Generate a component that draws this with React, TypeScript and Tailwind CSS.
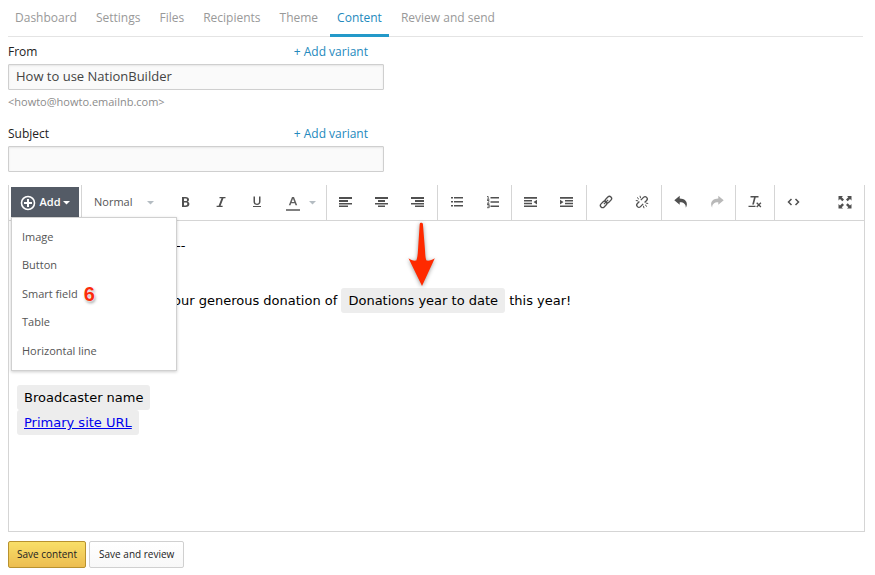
import type { ReactNode } from "react";

const tabs = ["Dashboard", "Settings", "Files", "Recipients", "Theme", "Content", "Review and send"];
const addItems = ["Image", "Button", "Smart field", "Table", "Horizontal line"];

function Caret({ className }: { className: string }) {
  return (
    <svg viewBox="0 0 7 4" className={`h-1 w-[7px] ${className}`} fill="currentColor" aria-hidden="true">
      <path d="M0 0h7L3.5 3.5z" />
    </svg>
  );
}

function Icon({ children }: { children: ReactNode }) {
  return (
    <svg viewBox="0 0 16 16" className="size-4" fill="currentColor" aria-hidden="true">
      {children}
    </svg>
  );
}

function Tool({ label, children, muted = false }: { label: string; children: ReactNode; muted?: boolean }) {
  return (
    <button
      type="button"
      aria-label={label}
      disabled={muted}
      className={`flex h-full w-9 shrink-0 items-center justify-center pb-0.5 ${muted ? "text-[#b9b9b9]" : "text-[#505050]"}`}
    >
      <Icon>{children}</Icon>
    </button>
  );
}

function Group({ children, tight = false }: { children: ReactNode; tight?: boolean }) {
  return (
    <div className={`flex h-full shrink-0 items-center border-r border-[#d5d5d5] ${tight ? "pl-px" : "px-px"}`}>
      {children}
    </div>
  );
}

function Field({ id, label, value, children }: { id: string; label: string; value: string; children?: ReactNode }) {
  return (
    <div className="w-[376px] max-w-full">
      <div className="flex items-center justify-between pr-4 leading-4">
        <label htmlFor={id}>{label}</label>
        <a href="#variant" className="text-[#2389bd]">
          + Add variant
        </a>
      </div>
      <input
        id={id}
        defaultValue={value}
        className="mt-1 block h-[26px] w-full rounded-[1px] border border-[#cfcfcf] bg-[#fafafa] px-[7px] pb-0.5 text-[13px] text-[#444] shadow-[inset_0_1px_2px_#e6e6e6] outline-none"
      />
      {children}
    </div>
  );
}

const link = (
  <g transform="rotate(-45 8 8)" fill="none" stroke="currentColor" strokeWidth="1.3">
    <rect x="1" y="5.8" width="7.4" height="4.4" rx="2.2" />
    <rect x="7.6" y="5.8" width="7.4" height="4.4" rx="2.2" />
    <path d="M5 8h6" strokeWidth="1.2" />
  </g>
);

const unlink = (
  <g fill="none" stroke="currentColor" strokeWidth="1.3">
    <g transform="rotate(-45 8 8)">
      <path d="M6.5 5.800H3.700a2.200 2.200 0 0 0 0 4.400h3.800M8.500 5.800h3.800a2.200 2.200 0 0 1 0 4.400H9.500" />
    </g>
    <path
      d="M6 1.800l.6 2.400M3 3.400l1.900 1.800M1.800 6.500l2.300.4M10 14.200l-.6-2.400M13 12.600l-1.900-1.800M14.200 9.500l-2.300-.4"
      strokeWidth="1"
    />
  </g>
);

const undo = <path d="M1.300 6.200L6.700 1.800v2.600c4.900.1 7.200 2.700 7.200 5.800 0 1.300-.4 2.500-1.100 3.500.1-3.400-1.900-5.400-6.100-5.400v2.500z" />;

export default function App() {
  return (
    <main className="pl-2 pr-3 font-['Open_Sans','Noto_Sans',sans-serif] text-xs text-[#222]">
      <nav className="flex h-[37px] gap-[5px] border-b border-[#e4e4e4]">
        {tabs.map((tab) => (
          <a
            key={tab}
            href="#tab"
            aria-current={tab === "Content" ? "page" : undefined}
            className={`-mb-px flex items-center px-[7px] ${
              tab === "Content" ? "border-b-3 border-[#2399c9] pt-[2px] text-[#2389bd]" : "pb-px text-[#999]"
            }`}
          >
            {tab}
          </a>
        ))}
      </nav>

      <form className="pt-[7px]">
        <Field id="from" label="From" value="How to use NationBuilder">
          <p className="mt-1 text-[11px] leading-4 text-[#8b8b8b]">&lt;howto@howto.emailnb.com&gt;</p>
        </Field>
        <div className="pt-4">
          <Field id="subject" label="Subject" value="" />
        </div>

        <section className="-mr-0.5 mt-[13px] border-x border-b border-[#d5d5d5]">
          <div className="flex h-9 border-b border-[#d5d5d5]">
            <div className="relative flex h-full shrink-0 items-end border-r border-[#d5d5d5] px-0.5 pb-0.5">
              <button
                type="button"
                aria-expanded="true"
                className="flex h-[31px] w-[68px] items-center justify-center gap-1 bg-[#545b66] font-semibold text-white"
              >
                <svg viewBox="0 0 16 16" className="size-4" fill="none" stroke="currentColor" strokeWidth="1.6" aria-hidden="true">
                  <circle cx="8" cy="8" r="6.5" />
                  <path d="M8 4v8M4 8h8" strokeWidth="2" />
                </svg>
                <span className="flex items-center gap-[3px] text-[11px]">
                  Add
                  <Caret className="text-white" />
                </span>
              </button>
              <ul className="absolute left-0.5 top-8 z-10 flex h-[154px] w-[166px] flex-col border border-[#d0d0d0] bg-white py-[5px] text-[11px] text-[#555] shadow-[0_1px_3px_#00000033]">
                {addItems.map((item) => (
                  <li key={item} className="flex flex-1 items-center px-2.5">
                    <button type="button">{item}</button>
                    {item === "Smart field" && (
                      <span className="pl-1.5 font-['Liberation_Sans',sans-serif] text-xl leading-5 font-bold text-[#fb2b0b] [text-shadow:0_0_2px_#fff,0_0_2px_#fff,1px_2px_3px_#999]">
                        6
                      </span>
                    )}
                  </li>
                ))}
              </ul>
            </div>

            <Group>
              <div className="relative flex h-full w-[84px] items-center">
                <select
                  aria-label="Paragraph style"
                  className="h-full w-full appearance-none bg-transparent pl-[11px] text-[11px] text-[#555] outline-none"
                >
                  <option>Normal</option>
                </select>
                <Caret className="pointer-events-none absolute right-[13px] text-[#b4bcc2]" />
              </div>
              <Tool label="Bold">
                <path d="M5 3h3.6c2.2 0 3.4.9 3.4 2.5 0 1.1-.6 1.9-1.6 2.2 1.3.3 2 1.1 2 2.3 0 1.9-1.4 3-3.7 3H5zm2 1.6v2.5h1.5c1 0 1.5-.4 1.5-1.2 0-.9-.5-1.3-1.5-1.3zm0 4v2.8h1.7c1.1 0 1.6-.5 1.6-1.4s-.6-1.4-1.7-1.4z" />
              </Tool>
              <Tool label="Italic">
                <path d="M6.500 3h6v1.200h-2L7.600 11.800h2V13h-6v-1.200h2L8.500 4.200h-2z" />
              </Tool>
              <Tool label="Underline">
                <path d="M4.500 2.500H6v5c0 1.500.7 2.200 2 2.200s2-.7 2-2.200v-5h1.500v5.100c0 2.100-1.300 3.400-3.500 3.400s-3.500-1.300-3.500-3.400zM4 12h8v1H4z" />
              </Tool>
              <button
                type="button"
                aria-label="Text color"
                className="flex h-full w-[50px] items-center gap-[9px] pl-[11px] text-[#606060]"
              >
                <svg viewBox="0 0 14 16" className="h-4 w-3.5" fill="currentColor" aria-hidden="true">
                  <path d="M6 2h2l3.200 8.200H9.500L8.800 8.300H5.200l-.7 1.900H2.800zm1 1.700L5.700 7h2.600z" />
                  <path d="M0 14h14v2H0z" opacity=".8" />
                </svg>
                <Caret className="text-[#b4bcc2]" />
              </button>
            </Group>

            <Group>
              <Tool label="Align left">
                <path d="M1 3h13v2H1zM1 6h9v2H1zM1 9h13v1.5H1zM1 11.5h9V13H1z" />
              </Tool>
              <Tool label="Align center">
                <path d="M1 3h13v2H1zM4 6h7v2H4zM1 9h13v1.5H1zM4 11.5h7V13H4z" />
              </Tool>
              <Tool label="Align right">
                <path d="M1 3h13v2H1zM5 6h9v2H5zM1 9h13v1.5H1zM5 11.5h9V13H5z" />
              </Tool>
            </Group>

            <Group tight>
              <Tool label="Bulleted list">
                <path d="M2 3h2v1.6H2zM5 3h9v1.6H5zM2 7h2v1.6H2zM5 7h9v1.6H5zM2 11h2v1.6H2zM5 11h9v1.6H5z" />
              </Tool>
              <Tool label="Numbered list">
                <path d="M5.5 3H14v1.6H5.5zM5.5 7.2H14v1.6H5.5zM5.5 11.4H14V13H5.5z" />
                <path
                  d="M2 2.5h1.2V5M2 5.3h2.4M2 6.5h2v1.2L2.3 9.3H4.4M2 10.5h2.2v3.2H2M2.5 12h1.7"
                  fill="none"
                  stroke="currentColor"
                  strokeWidth=".9"
                />
              </Tool>
            </Group>

            <Group>
              <Tool label="Outdent">
                <path d="M1 3h13v1.7H1zM1 6h8v1.5H1zM1 8.7h8v1.5H1zM1 11.5h13V13H1zM14 5.8v4.6L10.5 8.1z" />
              </Tool>
              <Tool label="Indent">
                <path d="M1 3h13v1.7H1zM6 6h8v1.5H6zM6 8.7h8v1.5H6zM1 11.5h13V13H1zM1 5.8v4.6l3.5-2.3z" />
              </Tool>
            </Group>

            <Group>
              <Tool label="Insert link">{link}</Tool>
              <Tool label="Remove link">{unlink}</Tool>
            </Group>

            <Group tight>
              <Tool label="Undo">{undo}</Tool>
              <Tool label="Redo" muted>
                <g transform="matrix(-1 0 0 1 16 0)">{undo}</g>
              </Tool>
            </Group>

            <Group>
              <Tool label="Clear formatting">
                <path d="M3.5 2h8v1.5H8.7L6.9 10.5H5.2L7 3.5H3.5zM1.5 11.7h7v1.4h-7z" />
                <path d="M9.7 8.8l4.2 4.2M13.9 8.8L9.7 13" fill="none" stroke="currentColor" strokeWidth="1.3" />
              </Tool>
            </Group>

            <Tool label="View source">
              <path d="M6.5 5L3.500 8l3 3M10.500 5l3 3-3 3" fill="none" stroke="currentColor" strokeWidth="1.500" />
            </Tool>
            <div className="ml-auto h-full pr-px">
              <Tool label="Full screen">
                <path d="M1.5 2h4.5L4.7 3.3l2.3 2.3L5.3 7.3 3 5 1.5 6.5zM14.5 2H10l1.3 1.3L9 5.6l1.7 1.7L13 5l1.5 1.5zM1.5 14.5H6l-1.3-1.3L7 10.9 5.3 9.2 3 11.5 1.5 10zM14.5 14.5H10l1.3-1.3L9 10.9l1.7-1.7L13 11.5l1.5-1.5z" />
              </Tool>
            </div>
          </div>

          <div className="relative h-[310px] px-2 pt-3 font-['DejaVu_Sans',sans-serif] text-[13px] leading-[25px] text-black">
            <p className="pl-[159px]">--</p>
            <p className="mt-[30px] pl-[156px]">
              our generous donation of{" "}
              <span className="inline-block rounded-[3px] bg-[#ededed] px-[7px]">Donations year to date</span> this year!
            </p>
            <p className="mt-[72px]">
              <span className="inline-block rounded-[3px] bg-[#ededed] px-[7px]">Broadcaster name</span>
            </p>
            <p>
              <a href="#site" className="inline-block rounded-[3px] bg-[#ededed] px-[7px] text-[#0000ee] underline">
                Primary site URL
              </a>
            </p>
            <svg
              viewBox="0 0 32 68"
              className="absolute left-[397px] top-0 h-[68px] w-8 drop-shadow-[0_1px_2px_#00000066]"
              fill="#ff2a00"
              aria-hidden="true"
            >
              <path d="M13.7 3c.2-1.600 3-1.600 3.200 0L19 29c.3 6 .6 8.500 1.500 10.500 2.500.5 5.500-.5 8.300-2.200L16 65 2.500 37.300c2.500 1.700 5 2.700 7.800 2.200 1-2.500 1.400-5.500 1.700-10.500z" />
            </svg>
          </div>
        </section>

        <div className="mt-[9px] flex gap-[3px] text-[10px]">
          <button
            type="submit"
            className="h-[27px] rounded-[2px] border border-[#b8922f] bg-linear-to-b from-[#f9df68] to-[#ecbd50] px-2"
          >
            Save content
          </button>
          <button
            type="button"
            className="h-[27px] rounded-[2px] border border-[#d0d0d0] bg-linear-to-b from-white to-[#f8f8f8] px-[9px]"
          >
            Save and review
          </button>
        </div>
      </form>
    </main>
  );
}
